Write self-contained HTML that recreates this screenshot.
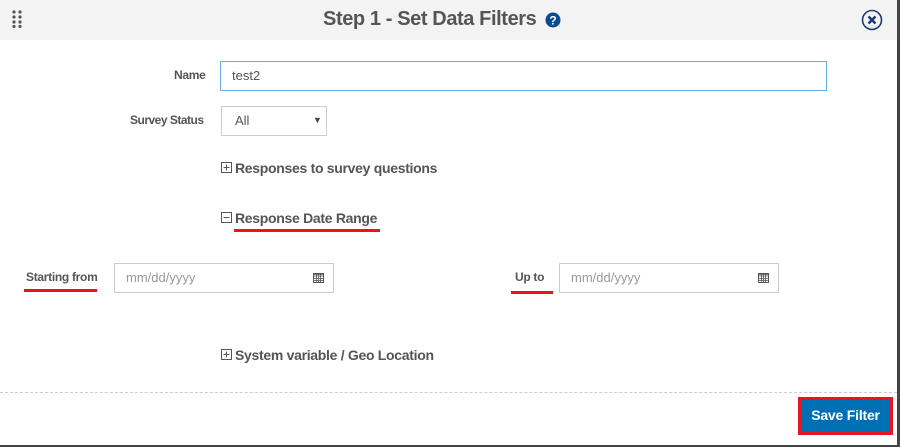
<!DOCTYPE html>
<html><head><style>
*{margin:0;padding:0;box-sizing:border-box}
body{width:900px;height:447px;background:#fff;font-family:"Liberation Sans",Arial,sans-serif;position:relative;overflow:hidden;color:#555}
.a{position:absolute}
.hdr{left:0;top:0;width:897px;height:40px;background:#f3f3f3}
.lbl{font-size:12px;font-weight:bold;color:#555;letter-spacing:-0.3px}
.inp{border:1px solid #ccc;background:#fff}
.red{background:#e8141e;height:3px}
.sec{font-size:14px;font-weight:bold;color:#555;letter-spacing:-0.3px}
</style></head><body>
<div class="a hdr"></div>
<div class="a" style="left:897px;top:0;width:3px;height:447px;background:#444"></div>
<div class="a" style="left:0;top:445px;width:900px;height:2px;background:#444"></div>
<svg class="a" style="left:12px;top:10px" width="11" height="18"><g fill="#555"><circle cx="2" cy="2" r="1.6"/><circle cx="8" cy="2" r="1.6"/><circle cx="2" cy="7" r="1.6"/><circle cx="8" cy="7" r="1.6"/><circle cx="2" cy="12" r="1.6"/><circle cx="8" cy="12" r="1.6"/><circle cx="2" cy="16.5" r="1.6"/><circle cx="8" cy="16.5" r="1.6"/></g></svg>
<div class="a" style="left:323px;top:8px;font-size:20px;font-weight:bold;color:#555;letter-spacing:-0.4px">Step 1 - Set Data Filters</div>
<svg class="a" style="left:545px;top:12px" width="16" height="16"><circle cx="8" cy="8" r="7.5" fill="#0a4a8f"/><text x="8" y="12.5" font-size="12" font-weight="bold" fill="#fff" text-anchor="middle" font-family="Liberation Sans">?</text></svg>
<svg class="a" style="left:861px;top:9px" width="22" height="22"><circle cx="11" cy="11" r="9.5" fill="none" stroke="#1a3a6e" stroke-width="1.6"/><path d="M7.5 7.5L14.5 14.5M14.5 7.5L7.5 14.5" stroke="#1a3a6e" stroke-width="2.4"/></svg>

<div class="a lbl" style="left:174px;top:68px">Name</div>
<div class="a" style="left:220px;top:61px;width:607px;height:30px;border:1px solid #66aee8"></div>
<div class="a" style="left:232px;top:68px;font-size:13px;color:#555">test2</div>

<div class="a lbl" style="left:130px;top:113px;letter-spacing:-0.5px">Survey Status</div>
<div class="a inp" style="left:221px;top:106px;width:106px;height:30px"></div>
<div class="a" style="left:235px;top:113px;font-size:13px;color:#555">All</div>
<div class="a" style="left:313px;top:115px;font-size:9px;color:#444">▼</div>

<svg class="a" style="left:221px;top:162px" width="11" height="11"><rect x="0.5" y="0.5" width="10" height="10" fill="none" stroke="#555"/><path d="M2.5 5.5h6M5.5 2.5v6" stroke="#555"/></svg>
<div class="a sec" style="left:235px;top:160px">Responses to survey questions</div>

<svg class="a" style="left:221px;top:212px" width="11" height="11"><rect x="0.5" y="0.5" width="10" height="10" fill="none" stroke="#555"/><path d="M2.5 5.5h6" stroke="#555"/></svg>
<div class="a sec" style="left:235px;top:210px">Response Date Range</div>
<div class="a red" style="left:234px;top:229px;width:146px"></div>

<div class="a lbl" style="left:26px;top:270px">Starting from</div>
<div class="a red" style="left:24px;top:289px;width:73px"></div>
<div class="a inp" style="left:114px;top:263px;width:220px;height:30px"></div>
<div class="a" style="left:126px;top:270px;font-size:13px;color:#999">mm/dd/yyyy</div>
<svg class="a" style="left:313px;top:272px" width="11" height="11"><rect x="0.5" y="1.5" width="10" height="9" fill="none" stroke="#555"/><path d="M0.5 2.5h10M0.5 4h10M0.5 6.5h10M0.5 8.5h10M3.5 1.5v9M5.5 1.5v9M7.5 1.5v9" stroke="#555" stroke-width="0.8"/></svg>

<div class="a lbl" style="left:515px;top:270px">Up to</div>
<div class="a red" style="left:511px;top:291px;width:42px"></div>
<div class="a inp" style="left:559px;top:263px;width:220px;height:30px"></div>
<div class="a" style="left:571px;top:270px;font-size:13px;color:#999">mm/dd/yyyy</div>
<svg class="a" style="left:758px;top:272px" width="11" height="11"><rect x="0.5" y="1.5" width="10" height="9" fill="none" stroke="#555"/><path d="M0.5 2.5h10M0.5 4h10M0.5 6.5h10M0.5 8.5h10M3.5 1.5v9M5.5 1.5v9M7.5 1.5v9" stroke="#555" stroke-width="0.8"/></svg>

<svg class="a" style="left:221px;top:349px" width="11" height="11"><rect x="0.5" y="0.5" width="10" height="10" fill="none" stroke="#555"/><path d="M2.5 5.5h6M5.5 2.5v6" stroke="#555"/></svg>
<div class="a sec" style="left:235px;top:347px">System variable / Geo Location</div>

<div class="a" style="left:0;top:392px;width:897px;border-top:1px dashed #ccc"></div>
<div class="a" style="left:798px;top:397px;width:95px;height:38px;background:#e8141e"></div>
<div class="a" style="left:801px;top:400px;width:89px;height:32px;background:#0070b4;color:#fff;font-size:14px;font-weight:bold;text-align:center;line-height:31px;letter-spacing:-0.2px">Save Filter</div>
</body></html>
